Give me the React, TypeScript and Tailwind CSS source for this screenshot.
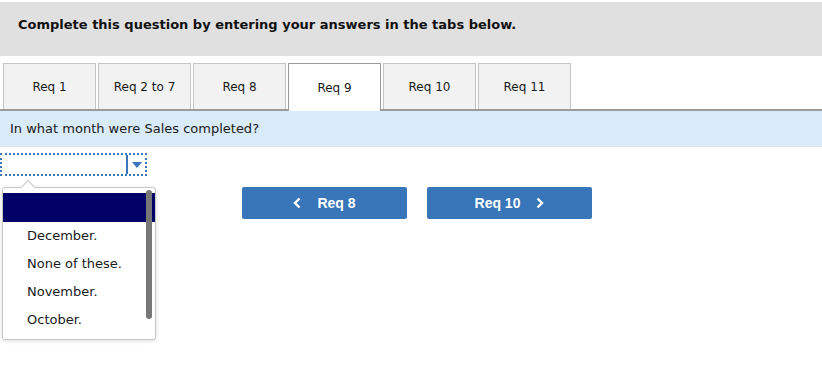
import React from "react";

const tabs = ["Req 1", "Req 2 to 7", "Req 8", "Req 9", "Req 10", "Req 11"];
const options = ["December.", "None of these.", "November.", "October."];

export default function App() {
  const active = 3;
  return (
    <div className="w-[822px] h-[373px] bg-white relative overflow-hidden font-['DejaVu_Sans',Verdana,sans-serif] text-[#1a1a1a]">
      <div className="mt-[2px] h-[54px] bg-[#e0e0e0] pl-[18px] pt-[10px]">
        <span className="text-[13px] font-bold text-[#111]">
          Complete this question by entering your answers in the tabs below.
        </span>
      </div>

      <div className="mt-[7px] flex gap-[2px] pl-[3px] border-b-2 border-[#9a9a9a] h-[48px] items-end">
        {tabs.map((t, i) => (
          <div
            key={t}
            className={
              i === active
                ? "w-[93px] h-[48px] -mb-[2px] bg-white border border-b-0 border-[#9a9a9a] flex items-center justify-center text-[12px]"
                : "w-[93px] h-[46px] bg-[#f2f2f2] border border-b-0 border-[#c4c4c4] flex items-center justify-center text-[12px]"
            }
          >
            {t}
          </div>
        ))}
      </div>

      <div className="h-[36px] bg-[#d9ebf9] flex items-center pl-[10px] text-[13px]">
        In what month were Sales completed?
      </div>

      <div className="mt-[6px] flex items-start">
        <div className="w-[147px] h-[23px] border-2 border-dotted border-[#3a76b9] flex">
          <div className="flex-1" />
          <div className="w-[19px] border-l-2 border-[#3a76b9] flex items-center justify-center">
            <svg width="10" height="6" viewBox="0 0 10 6">
              <path d="M0 0 H10 L5 6 Z" fill="#3a76b9" />
            </svg>
          </div>
        </div>

        <div className="ml-[95px] mt-[34px] flex gap-[20px]">
          <button className="w-[165px] h-[32px] bg-[#3875b9] rounded-[2px] text-white font-bold text-[14px] font-['Liberation_Sans',Arial,sans-serif] flex items-center justify-center gap-[16px]">
            <svg width="8" height="12" viewBox="0 0 8 12">
              <path d="M6.5 1.5 L2 6 L6.5 10.5" stroke="white" strokeWidth="2.4" fill="none" />
            </svg>
            <span>Req 8</span>
          </button>
          <button className="w-[165px] h-[32px] bg-[#3875b9] rounded-[2px] text-white font-bold text-[14px] font-['Liberation_Sans',Arial,sans-serif] flex items-center justify-center gap-[16px]">
            <span>Req 10</span>
            <svg width="8" height="12" viewBox="0 0 8 12">
              <path d="M1.5 1.5 L6 6 L1.5 10.5" stroke="white" strokeWidth="2.4" fill="none" />
            </svg>
          </button>
        </div>
      </div>

      <div className="absolute left-[2px] top-[187px] w-[154px] h-[153px] bg-white border border-[#c8c8c8] rounded-[3px] shadow-[0_1px_4px_rgba(0,0,0,0.15)]">
        <div className="absolute -top-[6px] left-[20px] w-[10px] h-[10px] bg-white border-l border-t border-[#c8c8c8] rotate-45" />
        <div className="relative mt-[5px] h-[29px] bg-[#000066]" />
        <div className="relative pl-[24px] text-[13px] text-[#1a1a1a]">
          {options.map((o) => (
            <div key={o} className="h-[28px] flex items-center">
              {o}
            </div>
          ))}
        </div>
        <div className="absolute left-[143px] top-[2px] w-[6px] h-[129px] bg-[#777] rounded-[3px]" />
      </div>
    </div>
  );
}
